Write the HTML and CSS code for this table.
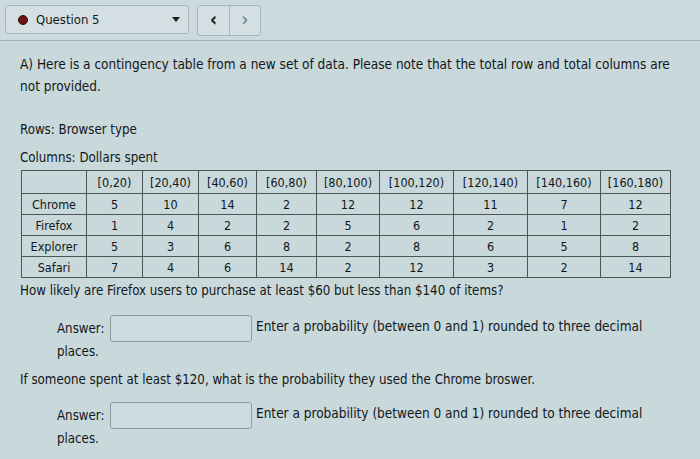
FILE: index.html
```html
<!DOCTYPE html>
<html>
<head>
<meta charset="utf-8">
<link rel="stylesheet" href="styles.css">
</head>
<body>
<div class="topbar">
  <div class="select">
    <span class="dot"></span>
    <span class="qlabel">Question 5</span>
    <span class="caret"></span>
  </div>
  <div class="nav">
    <div class="navbtn">&lsaquo;</div>
    <div class="navbtn light">&rsaquo;</div>
  </div>
</div>
<div class="content">
  <p class="intro">A) Here is a contingency table from a new set of data. Please note that the total row and total columns are not provided.</p>
  <p class="rows">Rows: Browser type</p>
  <p class="cols">Columns: Dollars spent</p>
  <table class="ct">
    <colgroup>
      <col style="width:65px"><col style="width:56px"><col style="width:56px"><col style="width:58px"><col style="width:60px"><col style="width:63px"><col style="width:74px"><col style="width:74px"><col style="width:73px"><col style="width:70px">
    </colgroup>
    <tr class="head"><th></th><th>[0,20)</th><th>[20,40)</th><th>[40,60)</th><th>[60,80)</th><th>[80,100)</th><th>[100,120)</th><th>[120,140)</th><th>[140,160)</th><th>[160,180)</th></tr>
    <tr><th>Chrome</th><td>5</td><td>10</td><td>14</td><td>2</td><td>12</td><td>12</td><td>11</td><td>7</td><td>12</td></tr>
    <tr><th>Firefox</th><td>1</td><td>4</td><td>2</td><td>2</td><td>5</td><td>6</td><td>2</td><td>1</td><td>2</td></tr>
    <tr><th>Explorer</th><td>5</td><td>3</td><td>6</td><td>8</td><td>2</td><td>8</td><td>6</td><td>5</td><td>8</td></tr>
    <tr><th>Safari</th><td>7</td><td>4</td><td>6</td><td>14</td><td>2</td><td>12</td><td>3</td><td>2</td><td>14</td></tr>
  </table>
  <p class="q q1">How likely are Firefox users to purchase at least $60 but less than $140 of items?</p>
  <div class="answer a1">
    <div class="arow"><span class="alabel">Answer:</span><span class="abox"></span><span class="ahint">Enter a probability (between 0 and 1) rounded to three decimal</span></div>
    <div class="places">places.</div>
  </div>
  <p class="q q2">If someone spent at least $120, what is the probability they used the Chrome broswer.</p>
  <div class="answer a2">
    <div class="arow"><span class="alabel">Answer:</span><span class="abox"></span><span class="ahint">Enter a probability (between 0 and 1) rounded to three decimal</span></div>
    <div class="places">places.</div>
  </div>
</div>
</body>
</html>
```
FILE: styles.css
```css
html, body {
  margin: 0;
  padding: 0;
}
body {
  width: 700px;
  height: 459px;
  overflow: hidden;
  background: #c8d8db;
  color: #121719;
  font-family: "DejaVu Sans Condensed", "DejaVu Sans", sans-serif;
  font-size: 13.2px;
}
.topbar {
  display: flex;
  gap: 8px;
  padding: 5px 0 0 5px;
  height: 41px;
  box-sizing: border-box;
  border-bottom: 1px solid #a6b3b6;
  background: #ccdadd;
  align-items: flex-start;
}
.select {
  display: flex;
  align-items: center;
  width: 184px;
  height: 29px;
  box-sizing: border-box;
  border: 1px solid #a9b6b9;
  border-radius: 3px;
  background: #d3dfe2;
  padding: 0 8px 0 12px;
}
.dot {
  width: 10px;
  height: 10px;
  border-radius: 50%;
  background: #6b1512;
  border: 1px solid #3a0a08;
  box-sizing: border-box;
  margin-right: 8px;
}
.qlabel {
  font-size: 13px;
  flex: 1;
}
.caret {
  width: 0;
  height: 0;
  border-left: 4px solid transparent;
  border-right: 4px solid transparent;
  border-top: 5px solid #1a1a1a;
}
.nav {
  display: flex;
  height: 29px;
  border: 1px solid #a9b6b9;
  border-radius: 3px;
  background: #d3dfe2;
}
.navbtn {
  width: 31px;
  display: flex;
  align-items: center;
  justify-content: center;
  font-size: 19px;
  font-weight: bold;
  line-height: 1;
  padding-bottom: 3px;
  box-sizing: border-box;
}
.navbtn + .navbtn {
  border-left: 1px solid #a9b6b9;
}
.navbtn.light {
  color: #6a7b80;
  font-weight: normal;
}
.content {
  padding: 0 0 0 20px;
}
p {
  margin: 0;
  line-height: 22px;
}
.intro {
  margin-top: 12px;
  width: 662px;
  font-size: 13.5px;
}
.rows {
  margin-top: 22px;
}
.cols {
  margin-top: 6px;
}
.ct {
  margin-top: 1px;
  margin-left: 1px;
  border-collapse: collapse;
  table-layout: fixed;
}
.ct th, .ct td {
  border: 1px solid #4e5558;
  text-align: center;
  font-weight: normal;
  padding: 0;
  height: 20px;
  font-size: 12.5px;
}
.ct .head th {
  height: 22px;
}
.q1 {
  margin-top: 2px;
}
.q2 {
  margin-top: 6px;
}
.answer {
  padding-left: 37px;
}
.arow {
  display: flex;
  align-items: center;
  line-height: 22px;
}
.a1 .arow {
  margin-top: 13px;
}
.a2 .arow {
  margin-top: 11px;
}
.alabel {
  width: 53px;
}
.abox {
  width: 142px;
  height: 27px;
  box-sizing: border-box;
  border: 1px solid #8f9c9f;
  border-radius: 3px;
  background: #cedbde;
  margin-right: 4px;
}
.ahint {
  align-self: flex-start;
  font-size: 13.5px;
}
.places {
  margin-top: -1px;
  line-height: 22px;
}
```
